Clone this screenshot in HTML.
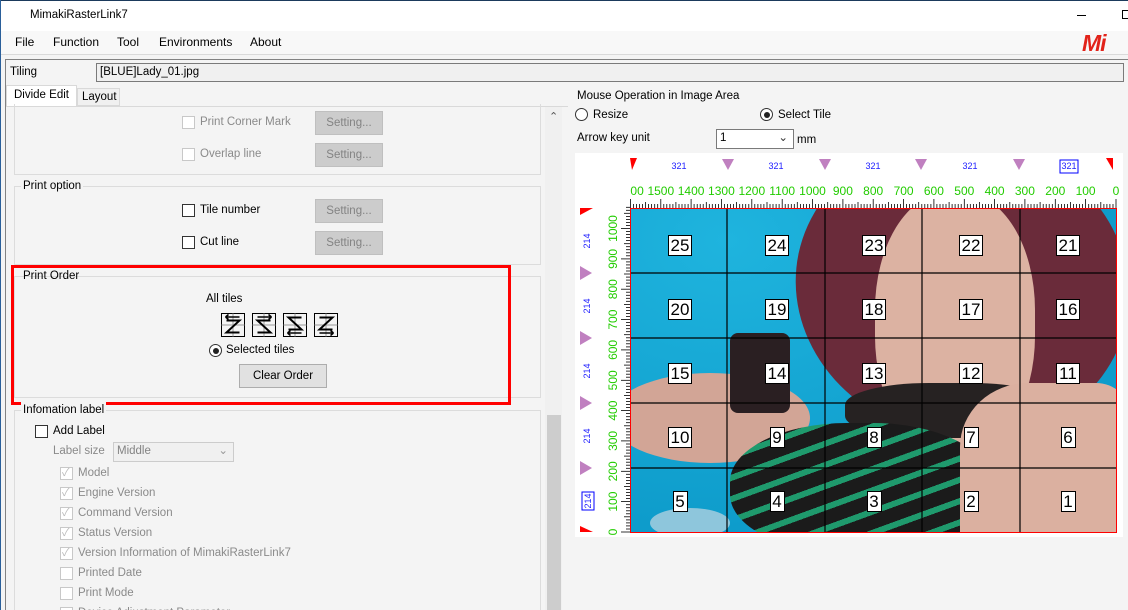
<!DOCTYPE html>
<html><head><meta charset="utf-8">
<style>
*{box-sizing:border-box;margin:0;padding:0}
html,body{width:1128px;height:610px;overflow:hidden}
body{background:#f4f4f4;font-family:"Liberation Sans","Noto Sans CJK JP",sans-serif;font-size:11.5px;line-height:17px;color:#000;position:relative}
.a{position:absolute;white-space:nowrap}
.cb{position:absolute;width:13px;height:13px;border:1px solid #333;background:#fff}
.cb.d{border-color:#c8c8c8}
.btn{position:absolute;background:#e1e1e1;border:1px solid #adadad;text-align:center;line-height:22px;color:#000}
.btn.d{background:#ccc;border-color:#bfbfbf;color:#838383}
.grp{position:absolute;border:1px solid #dcdcdc}
.gl{position:absolute;background:#f4f4f4;padding:0 2px;top:-9px;left:7px}
.rad{position:absolute;width:13px;height:13px;border:1px solid #333;border-radius:50%;background:#fff}
.rad.on::after{content:"";position:absolute;left:2.5px;top:2.5px;width:6px;height:6px;border-radius:50%;background:#222}
.gray{color:#8a8a8a}
.lbl{position:absolute;background:#fff;border:1px solid #000;font-size:17px;line-height:19px;text-align:center;height:21px}
</style></head><body>
<div class="a" style="left:0;top:0;width:1128px;height:31px;background:#fff;border-top:1px solid #1b3a5c"></div>
<div class="a" style="left:0;top:0;width:1px;height:610px;background:#2a5f9a"></div>
<div class="a" style="left:30px;top:7px;font-size:11.5px">MimakiRasterLink7</div>
<div class="a" style="left:1077px;top:15px;width:9px;height:1px;background:#000"></div>
<div class="a" style="left:1122px;top:10px;width:9px;height:9px;border:1px solid #000"></div>
<div class="a" style="left:1px;top:31px;width:1127px;height:24px;background:#f8f8f8;border-bottom:1px solid #dadada"></div>
<div class="a" style="left:15px;top:34px;font-size:12px">File</div>
<div class="a" style="left:53px;top:34px;font-size:12px">Function</div>
<div class="a" style="left:117px;top:34px;font-size:12px">Tool</div>
<div class="a" style="left:159px;top:34px;font-size:12px">Environments</div>
<div class="a" style="left:250px;top:34px;font-size:12px">About</div>
<div class="a" style="left:1082px;top:29px;font-size:23px;line-height:28px;font-weight:bold;font-style:italic;color:#e2231a;letter-spacing:-1px">Mi</div>
<div class="a" style="left:5px;top:59px;width:1130px;height:560px;border:1px solid #828282;border-right:none;border-bottom:none"></div>
<div class="a" style="left:10px;top:64px">Tiling</div>
<div class="a" style="left:96px;top:63px;width:1028px;height:19px;border:1px solid #7a7a7a;background:#f0f0f0;padding-left:3px;line-height:17px">[BLUE]Lady_01.jpg</div>
<div class="a" style="left:6px;top:85px;width:71px;height:22px;background:#fff;border:1px solid #d9d9d9;border-bottom:none;padding:1px 0 0 7px">Divide Edit</div>
<div class="a" style="left:77px;top:88px;width:43px;height:18px;border:1px solid #d9d9d9;padding:0 0 0 4px;background:#f0f0f0">Layout</div>
<div class="a" style="left:6px;top:106px;width:562px;height:1px;background:#d9d9d9"></div>
<div class="a" style="left:545px;top:107px;width:17px;height:503px;background:#f0f0f0"></div>
<div class="a" style="left:547px;top:415px;width:14px;height:195px;background:#cdcdcd"></div>
<div class="a" style="left:549px;top:109px;font-size:11px;color:#555">&#8963;</div>
<div class="grp" style="left:14px;top:104px;width:527px;height:71px;border-top:none"></div>
<div class="cb d" style="left:182px;top:116px"></div><div class="a gray" style="left:200px;top:114px">Print Corner Mark</div>
<div class="btn d" style="left:315px;top:111px;width:68px;height:24px">Setting...</div>
<div class="cb d" style="left:182px;top:148px"></div><div class="a gray" style="left:200px;top:146px">Overlap line</div>
<div class="btn d" style="left:315px;top:143px;width:68px;height:24px">Setting...</div>
<div class="grp" style="left:14px;top:186px;width:527px;height:79px"><span class="gl" style="left:6px">Print option</span></div>
<div class="cb" style="left:182px;top:204px"></div><div class="a" style="left:200px;top:202px">Tile number</div>
<div class="btn d" style="left:315px;top:199px;width:68px;height:24px">Setting...</div>
<div class="cb" style="left:182px;top:236px"></div><div class="a" style="left:200px;top:234px">Cut line</div>
<div class="btn d" style="left:315px;top:231px;width:68px;height:24px">Setting...</div>
<div class="grp" style="left:14px;top:276px;width:527px;height:122px"></div>
<div class="a" style="left:11px;top:265px;width:500px;height:140px;border:3px solid #f00"></div>
<div class="a" style="left:23px;top:268px">Print Order</div>
<div class="a" style="left:206px;top:291px">All tiles</div>
<svg class="a" style="left:221px;top:313px" width="120" height="26" viewBox="0 0 120 26">
<g fill="none" stroke-width="1">
<g transform="translate(0.5,0.5)"><rect width="23" height="23" stroke="#000"/><path d="M0 11.5H23M11.5 0V23" stroke="#999"/><path d="M5 7H18L5 19H18" stroke="#000" stroke-width="2"/><path d="M4 3.5H18M4 3.5L7 1M4 3.5L7 6" stroke="#000" stroke-width="1.5"/></g>
<g transform="translate(31.5,0.5)"><rect width="23" height="23" stroke="#000"/><path d="M0 11.5H23M11.5 0V23" stroke="#999"/><path d="M18 7H5L18 19H5" stroke="#000" stroke-width="2"/><path d="M5 3.5H19M19 3.5L16 1M19 3.5L16 6" stroke="#000" stroke-width="1.5"/></g>
<g transform="translate(62.5,0.5)"><rect width="23" height="23" stroke="#000"/><path d="M0 11.5H23M11.5 0V23" stroke="#999"/><path d="M18 4H5L18 16H5" stroke="#000" stroke-width="2"/><path d="M4 19.5H18M4 19.5L7 17M4 19.5L7 22" stroke="#000" stroke-width="1.5"/></g>
<g transform="translate(93.5,0.5)"><rect width="23" height="23" stroke="#000"/><path d="M0 11.5H23M11.5 0V23" stroke="#999"/><path d="M5 4H18L5 16H18" stroke="#000" stroke-width="2"/><path d="M5 19.5H19M19 19.5L16 17M19 19.5L16 22" stroke="#000" stroke-width="1.5"/></g>
</g></svg>
<div class="rad on" style="left:209px;top:344px"></div><div class="a" style="left:226px;top:342px">Selected tiles</div>
<div class="btn" style="left:239px;top:364px;width:88px;height:24px">Clear Order</div>
<div class="grp" style="left:14px;top:410px;width:527px;height:220px"><span class="gl" style="left:6px">Infomation label</span></div>
<div class="cb" style="left:35px;top:425px"></div><div class="a" style="left:53px;top:423px">Add Label</div>
<div class="a gray" style="left:53px;top:443px">Label size</div>
<div class="a" style="left:113px;top:442px;width:121px;height:20px;border:1px solid #ccc;background:#f0f0f0;color:#838383;padding-left:3px;line-height:17px">Middle<span style="position:absolute;right:5px;top:0;color:#999">&#8964;</span></div>
<div id="chk"></div>
<div class="a" style="left:577px;top:88px">Mouse Operation in Image Area</div>
<div class="rad" style="left:575px;top:108px"></div><div class="a" style="left:593px;top:107px">Resize</div>
<div class="rad on" style="left:760px;top:108px"></div><div class="a" style="left:778px;top:107px">Select Tile</div>
<div class="a" style="left:577px;top:130px">Arrow key unit</div>
<div class="a" style="left:716px;top:129px;width:78px;height:20px;border:1px solid #7a7a7a;background:#fff;padding-left:3px;line-height:17px">1<span style="position:absolute;right:5px;top:0;color:#333">&#8964;</span></div>
<div class="a" style="left:797px;top:132px">mm</div>
<div class="a" style="left:575px;top:153px;width:548px;height:384px;background:#fff"></div>
<div class="a" style="left:630px;top:208px;width:487px;height:325px;overflow:hidden;background:#12a6d4">
 <div class="a" style="left:0;top:0;width:487px;height:325px;background:radial-gradient(ellipse at 20% 10%,#1fb4de,#0e9ccb 70%)"></div>
 <div class="a" style="left:165px;top:-70px;width:335px;height:300px;border-radius:50%;background:#6a2b3a;transform:rotate(12deg)"></div>
 <div class="a" style="left:245px;top:-15px;width:160px;height:260px;border-radius:45%;background:#dcb2a2"></div>
 <div class="a" style="left:215px;top:175px;width:210px;height:55px;border-radius:40%;background:#262222"></div>
 <div class="a" style="left:-20px;top:165px;width:200px;height:90px;border-radius:50%;background:#d2a596"></div>
 <div class="a" style="left:100px;top:215px;width:260px;height:130px;border-radius:45%;background:repeating-linear-gradient(160deg,#1b1b1b 0 9px,#1f9a6d 9px 15px,#1b1b1b 15px 20px)"></div>
 <div class="a" style="left:330px;top:175px;width:170px;height:160px;border-radius:40% 20% 0 0;background:#dbb0a0"></div>
 <div class="a" style="left:100px;top:125px;width:60px;height:80px;border-radius:8px;background:#2a1f22"></div>
 <div class="a" style="left:20px;top:300px;width:80px;height:30px;border-radius:50%;background:#8ec6dc"></div>
</div>
<svg class="a" style="left:630px;top:208px" width="487" height="325">
<g stroke="#000" stroke-width="1.2"><path d="M97 0V325M195 0V325M292 0V325M390 0V325M0 65H487M0 130H487M0 195H487M0 260H487"/></g>
<rect x="0.5" y="0.5" width="486" height="324" fill="none" stroke="#f00"/>
</svg>
<div id="labels"></div>
<svg class="a" style="left:575px;top:153px" width="553" height="384" id="rul" font-family="Liberation Sans, sans-serif"></svg>
<script>
var h='';var rows=['Model','Engine Version','Command Version','Status Version','Version Information of MimakiRasterLink7','Printed Date','Print Mode','Device Adjustment Parameter'];
rows.forEach(function(t,i){var y=467+i*20;var c=i<5;h+='<div class="cb d" style="left:60px;top:'+y+'px">'+(c?'<span style="position:absolute;left:1px;top:-3px;color:#bbb;font-size:11px">&#10003;</span>':'')+'</div><div class="a gray" style="left:78px;top:'+(y-2)+'px">'+t+'</div>';});
document.getElementById('chk').innerHTML=h;
var L='',cx=[680,777,874,971,1068],cy=[245,309,373,437,501],n=25;
for(var r=0;r<5;r++)for(var c=0;c<5;c++){var v=n--;var w=v>9?24:15;L+='<div class="lbl" style="left:'+(cx[c]-w/2)+'px;top:'+(cy[r]-10)+'px;width:'+w+'px">'+v+'</div>';}
document.getElementById('labels').innerHTML=L;
var s='<defs><clipPath id="ct"><rect x="55" y="0" width="500" height="60"/></clipPath></defs>',k=0.3035;
s+='<path d="M55 5L62 5L57 17Z" fill="#f00"/><path d="M531 5L538 5L538 17Z" fill="#f00"/>';
[153,250,346,444].forEach(function(x){s+='<path d="M'+(x-6)+' 6H'+(x+6)+'L'+x+' 17Z" fill="#c080c0"/>';});
[104,201,298,395].forEach(function(x){s+='<text x="'+x+'" y="16" font-size="9" fill="#2020ff" text-anchor="middle">321</text>';});
s+='<rect x="485" y="7" width="18" height="13" fill="none" stroke="#00f"/><text x="494" y="16" font-size="9" fill="#2020ff" text-anchor="middle">321</text>';
s+='<g clip-path="url(#ct)">';
for(var m=0;m<=1600;m+=10){var x=541-m*k;var hh=m%100==0?9:(m%50==0?6:4);if(x>=55)s+='<line x1="'+x.toFixed(1)+'" y1="'+(55-hh)+'" x2="'+x.toFixed(1)+'" y2="55" stroke="#000" stroke-width="0.8"/>';
if(m%100==0)s+='<text x="'+x.toFixed(1)+'" y="42" font-size="12" fill="#22cc00" text-anchor="middle">'+m+'</text>';}
s+='</g>';
s+='<path d="M5 55L18 55L5 62Z" fill="#f00"/><path d="M5 373L18 379L5 379Z" fill="#f00"/>';
[120,185,250,315].forEach(function(y){s+='<path d="M5 '+(y-7)+'L17 '+y+'L5 '+(y+7)+'Z" fill="#c080c0"/>';});
[88,153,218,283].forEach(function(y){s+='<text transform="translate(15,'+y+') rotate(-90)" font-size="9" fill="#2020ff" text-anchor="middle">214</text>';});
s+='<rect x="7" y="339" width="12" height="18" fill="none" stroke="#00f"/><text transform="translate(16,348) rotate(-90)" font-size="9" fill="#2020ff" text-anchor="middle">214</text>';
for(var m=0;m<=1070;m+=10){var y=379-m*k;var hh=m%100==0?9:(m%50==0?6:4);s+='<line x1="'+(55-hh)+'" y1="'+y.toFixed(1)+'" x2="55" y2="'+y.toFixed(1)+'" stroke="#000" stroke-width="0.8"/>';
if(m%100==0)s+='<text transform="translate(42,'+y.toFixed(1)+') rotate(-90)" font-size="12" fill="#22cc00" text-anchor="middle">'+m+'</text>';}
document.getElementById('rul').innerHTML=s;
</script>
</body></html>
